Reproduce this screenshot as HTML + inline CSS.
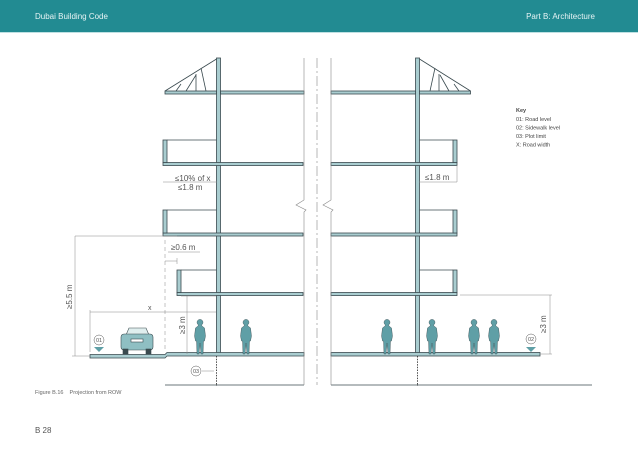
<!DOCTYPE html>
<html><head><meta charset="utf-8"><style>
html,body{margin:0;padding:0;background:#fff;}
body{width:638px;height:451px;overflow:hidden;position:relative;font-family:"Liberation Sans",sans-serif;}
.hdr{position:absolute;left:0;top:0;width:638px;height:32px;background:#228b92;border-bottom:1px solid #bfe0e2;}
.hdr span{position:absolute;top:12px;font-size:8px;color:#e8f4f5;}
svg{position:absolute;left:0;top:0;}
.cap{position:absolute;left:35px;top:390px;font-size:5.5px;color:#666;}
.pg{position:absolute;left:35px;top:426px;font-size:8px;color:#555;}
</style></head><body>
<div class="hdr"><span style="left:35px">Dubai Building Code</span><span style="right:43px">Part B: Architecture</span></div>
<svg width="638" height="451" viewBox="0 0 638 451" font-family="Liberation Sans, sans-serif">
<defs>
<path id="p" d="M-1.5,-29 a3,3 0 1 1 3,0 L2,-28 L4.5,-26 L5.5,-18 L4.5,-13 L3.5,-13 L3,0 L1,0 L0,-11 L-1,0 L-3,0 L-3.5,-13 L-4.5,-13 L-5.5,-18 L-4.5,-26 L-2,-28 Z" fill="#5f9fa6" stroke="#3a4a4f" stroke-width="0.4"/>
</defs>
<g stroke="#3a4a4f" stroke-width="0.8" fill="#a9cdd0">
<!-- left building -->
<rect x="216.5" y="58" width="4" height="297"/>
<rect x="165" y="91" width="51.5" height="3"/>
<rect x="220.5" y="91" width="83.5" height="3"/>
<rect x="163" y="162.5" width="140" height="3"/>
<rect x="163" y="233" width="140" height="3"/>
<rect x="177" y="292.5" width="126" height="3"/>
<rect x="163" y="140" width="4" height="22.5"/>
<rect x="163" y="210" width="4" height="23"/>
<rect x="177" y="270" width="4" height="22.5"/>
<path d="M90,354.5 H165 L167,352.5 H304 V356 H167 L165,358 H90 Z"/>
<!-- right building -->
<rect x="415.5" y="58" width="4" height="297"/>
<rect x="419.5" y="91" width="51" height="3"/>
<rect x="331" y="91" width="84.5" height="3"/>
<rect x="331" y="162.5" width="126" height="3"/>
<rect x="331" y="233" width="126" height="3"/>
<rect x="331" y="292.5" width="126" height="3"/>
<rect x="453" y="140" width="4" height="22.5"/>
<rect x="453" y="210" width="4" height="23"/>
<rect x="453" y="270" width="4" height="22.5"/>
<rect x="331" y="352.5" width="209" height="3.5"/>
</g>
<g stroke="#3a4a4f" stroke-width="0.8" fill="none">
<line x1="167" y1="140" x2="216.5" y2="140"/><line x1="167" y1="210" x2="216.5" y2="210"/><line x1="181" y1="270" x2="216.5" y2="270"/>
<line x1="419.5" y1="140" x2="453" y2="140"/><line x1="419.5" y1="210" x2="453" y2="210"/><line x1="419.5" y1="270" x2="453" y2="270"/>
<path d="M165,91 L216.5,59 M176,91 L181,84 M186,91 L196,75 M196,91 L196,74 M206,91 L201,68"/>
<path d="M470.5,91 L419.5,59 M459,91 L454,84 M449,91 L440,75 M439,91 L439,74 M430,91 L435,68"/>
<line x1="165" y1="385" x2="304" y2="385"/>
<line x1="331" y1="385" x2="592" y2="385"/>
</g>
<!-- break lines -->
<g stroke="#888" stroke-width="0.6" fill="none">
<path d="M304,58 V200 L296,205 L306,210 L304,212 V385"/>
<path d="M331,58 V200 L323,205 L333,210 L331,212 V385"/>
<line x1="317" y1="58" x2="317" y2="385" stroke-dasharray="10,3,2,3"/>
</g>
<!-- dims -->
<g stroke="#888" stroke-width="0.5" fill="none">
<path d="M75,236 V356 M75,236 H177 M72,356 H90"/>
<path d="M90,312 H216 M90,310 V352"/>
<path d="M187,296 V354 M181,296 H216"/>
<path d="M163,182 H217"/>
<path d="M419,182 H457 M457,165 V182"/>
<path d="M550,295 V354 M460,295 H552 M540,354 H552"/>
<path d="M165,240 V352" stroke-dasharray="4,3"/>
<path d="M165,261 H177 M177,258 V264 M168,252 H200"/>
<path d="M202,371 H214"/>
</g>
<g stroke="#222" stroke-width="0.8" stroke-dasharray="1.5,1.2"><line x1="216.5" y1="356" x2="216.5" y2="386"/><line x1="417.5" y1="356" x2="417.5" y2="386"/></g>
<!-- car -->
<g stroke="#3a4a4f" stroke-width="0.6" fill="#8fbfc3">
<path d="M126,335 L129,328 H146 L149,335 Z" fill="#dfeeee"/>
<rect x="121" y="334" width="32" height="16" rx="3"/>
<rect x="123" y="349" width="5" height="5" fill="#3a4a4f"/><rect x="146" y="349" width="5" height="5" fill="#3a4a4f"/>
<rect x="131" y="339" width="12" height="3" fill="#fff"/>
</g>
<!-- people -->
<use href="#p" x="200" y="354"/><use href="#p" x="246" y="354"/>
<use href="#p" x="387" y="354"/><use href="#p" x="432" y="354"/><use href="#p" x="474" y="354"/><use href="#p" x="494" y="354"/>
<!-- markers -->
<g stroke="#555" stroke-width="0.5" fill="#fff" font-size="5.5" text-anchor="middle">
<circle cx="99" cy="340" r="5"/><circle cx="531" cy="339" r="5"/><circle cx="196" cy="371" r="5"/>
</g>
<path d="M94,347 H104 L99,352 Z" fill="#5f9fa6"/><path d="M526,347 H536 L531,352 Z" fill="#5f9fa6"/>
<g fill="#555" font-size="5.5" text-anchor="middle">
<text x="99" y="342">01</text><text x="531" y="341">02</text><text x="196" y="373">03</text>
</g>
<g fill="#555" font-size="8">
<text x="175" y="181">≤10% of x</text><text x="178" y="190">≤1.8 m</text>
<text x="425" y="180">≤1.8 m</text>
<text x="171" y="250">≥0.6 m</text>
<text x="148" y="310" font-size="7">x</text>
<text transform="translate(72,309) rotate(-90)">≥5.5 m</text>
<text transform="translate(185,334) rotate(-90)">≥3 m</text>
<text transform="translate(546,333) rotate(-90)">≥3 m</text>
</g>
<g fill="#444" font-size="5.5">
<text x="516" y="112" font-weight="bold">Key</text>
<text x="516" y="121">01: Road level</text>
<text x="516" y="129.5">02: Sidewalk level</text>
<text x="516" y="138">03: Plot limit</text>
<text x="516" y="146.5">X: Road width</text>
</g>
</svg>
<div class="cap">Figure B.16&nbsp;&nbsp;&nbsp; Projection from ROW</div>
<div class="pg">B 28</div>
</body></html>
